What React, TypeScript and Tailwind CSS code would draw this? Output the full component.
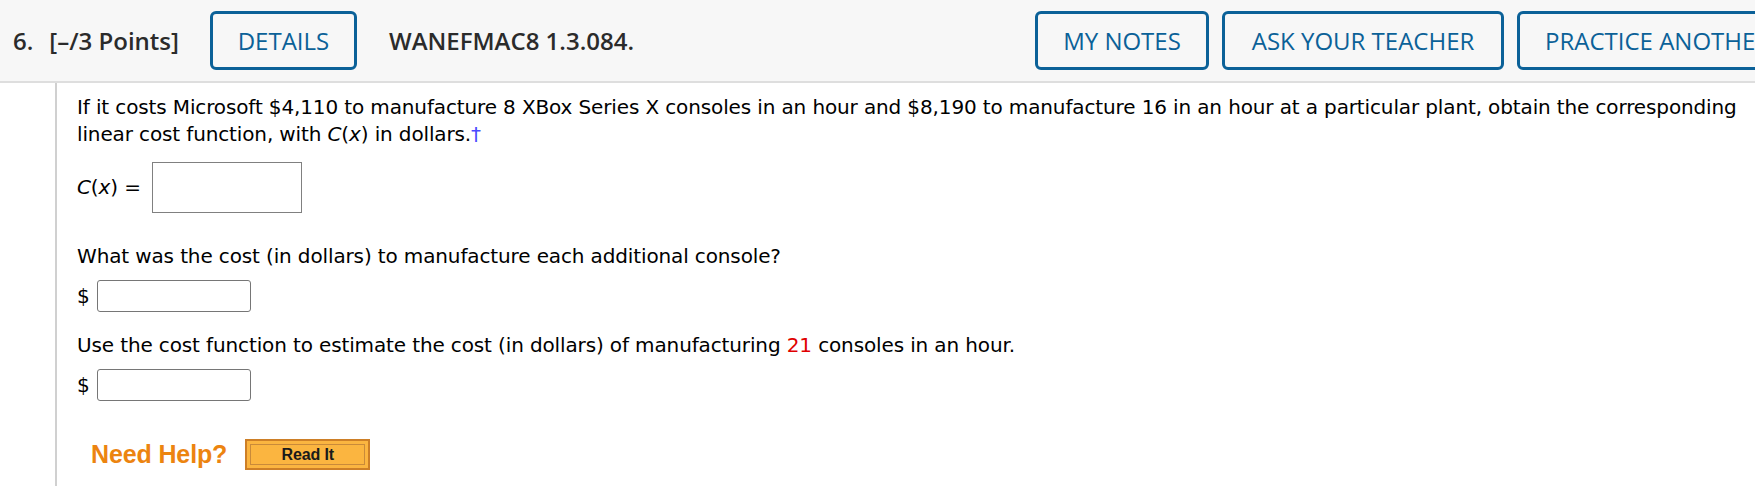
import React from "react";

const bodyFont = { fontFamily: '"DejaVu Sans", Verdana, sans-serif' };

function HeaderButton({ label, width }: { label: string; width: string }) {
  return (
    <div
      className={`${width} shrink-0 h-[59px] flex items-center justify-center px-[25px] border-[3px] border-[#0b6198] rounded-[6px] text-[#0b6198] text-[24px] whitespace-nowrap`}
    >
      {label}
    </div>
  );
}

function DollarInput() {
  return (
    <div className="flex items-center">
      <span className="w-[20px]">$</span>
      <div className="w-[154px] h-[32px] border border-[#767676] rounded-[3px] bg-white" />
    </div>
  );
}

export default function App() {
  return (
    <div className="w-[1755px] h-[486px] bg-white overflow-hidden flex flex-col">
      {/* question header */}
      <div
        className="h-[83px] shrink-0 bg-[#f7f7f7] border-b-2 border-[#dedede] flex items-center overflow-hidden"
        style={{ fontFamily: '"Open Sans", sans-serif' }}
      >
        <div className="w-[1035px] shrink-0 flex items-center pl-[13px] text-[24px] text-[#2b2b2b]">
          <span className="font-semibold">6.</span>
          <span className="font-semibold ml-[16px]">[–/3 Points]</span>
          <div className="ml-[31px]">
            <HeaderButton label="DETAILS" width="w-[147px]" />
          </div>
          <span className="font-semibold ml-[32px]">WANEFMAC8 1.3.084.</span>
        </div>
        <div className="flex items-center gap-[13px] shrink-0">
          <HeaderButton label="MY NOTES" width="w-[174px]" />
          <HeaderButton label="ASK YOUR TEACHER" width="w-[282px]" />
          <HeaderButton label="PRACTICE ANOTHER" width="w-auto" />
        </div>
      </div>

      <div className="flex flex-1">
        <div className="w-[57px] shrink-0 border-r-2 border-[#d0d0d0]" />
        <div className="pl-[20px] pt-[11px] text-[20px] leading-[27px] tracking-[-0.13px] text-black" style={bodyFont}>
          <p>
            If it costs Microsoft $4,110 to manufacture 8 XBox Series X consoles in an hour and $8,190 to manufacture 16 in an hour at a particular plant, obtain the corresponding
            <br />
            linear cost function, with <i>C</i>(<i>x</i>) in dollars.<span className="text-[#4a4aff]">†</span>
          </p>

          <div className="flex items-center mt-[14px]">
            <span className="mr-[11px]">
              <i>C</i>(<i>x</i>) =
            </span>
            <div className="w-[150px] h-[51px] border border-[#808080] bg-white" />
          </div>

          <p className="mt-[30px]">What was the cost (in dollars) to manufacture each additional console?</p>
          <div className="mt-[10px]">
            <DollarInput />
          </div>

          <p className="mt-[20px]">
            Use the cost function to estimate the cost (in dollars) of manufacturing <span className="text-[#e00000]">21</span> consoles in an hour.
          </p>
          <div className="mt-[10px]">
            <DollarInput />
          </div>

          <div className="flex items-center mt-[38px] ml-[14px]" style={{ fontFamily: '"Liberation Sans", Arial, sans-serif' }}>
            <span className="text-[25px] font-bold text-[#ec8410] leading-none">Need Help?</span>
            <div className="ml-[18px] w-[125px] h-[31px] border-2 border-[#cd7f27] bg-[#fbb540] p-[3px]">
              <div className="h-full border border-[#c98a3a] flex items-center justify-center text-[16px] font-bold text-[#1a1a1a] leading-none">
                Read It
              </div>
            </div>
          </div>
        </div>
      </div>
    </div>
  );
}
